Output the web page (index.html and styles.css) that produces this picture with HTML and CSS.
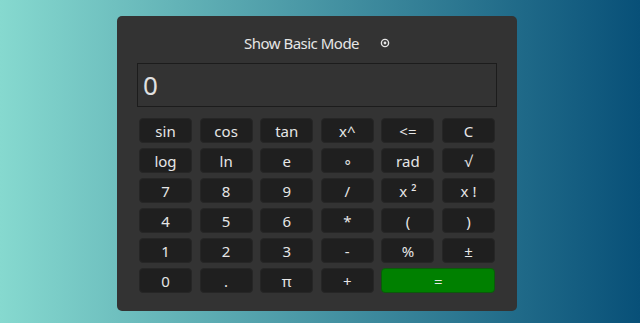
FILE: index.html
```html
<!DOCTYPE html>
<html lang="en">
<head>
    <meta charset="UTF-8">
    <meta name="viewport" content="width=device-width, initial-scale=1.0">
    <title>Calculator</title>
    <link rel="stylesheet" href="styles.css">
</head>
<body>
    <div class="calculator">
        <div class="mode-row">
            <span class="mode-label">Show Basic Mode</span>
            <svg class="mode-toggle" width="10" height="10" viewBox="0 0 10 10">
                <circle cx="5" cy="5" r="3.6" fill="none" stroke="#e6e6e6" stroke-width="1.4"/>
                <circle cx="5" cy="5" r="1.4" fill="#e6e6e6"/>
            </svg>
        </div>

        <div class="display">0</div>

        <div class="keys">
            <button class="key">sin</button>
            <button class="key">cos</button>
            <button class="key">tan</button>
            <button class="key">x^</button>
            <button class="key">&lt;=</button>
            <button class="key">C</button>

            <button class="key">log</button>
            <button class="key">ln</button>
            <button class="key">e</button>
            <button class="key">&#8728;</button>
            <button class="key">rad</button>
            <button class="key">&#8730;</button>

            <button class="key">7</button>
            <button class="key">8</button>
            <button class="key">9</button>
            <button class="key">/</button>
            <button class="key">x &#178;</button>
            <button class="key">x !</button>

            <button class="key">4</button>
            <button class="key">5</button>
            <button class="key">6</button>
            <button class="key">*</button>
            <button class="key">(</button>
            <button class="key">)</button>

            <button class="key">1</button>
            <button class="key">2</button>
            <button class="key">3</button>
            <button class="key">-</button>
            <button class="key">%</button>
            <button class="key">&#177;</button>

            <button class="key">0</button>
            <button class="key">.</button>
            <button class="key">&#960;</button>
            <button class="key">+</button>
            <button class="key equals">=</button>
        </div>
    </div>
</body>
</html>
```

FILE: styles.css
```css
html {
    background: linear-gradient(to right, #86d9cf, #085078);
    min-height: 100%;
}
body {
    font-family: 'Noto Sans', 'Open Sans', sans-serif;
    margin: 0;
    padding: 16px 6px 12px 0;
    color: #e6e6e6;
}
.calculator {
    width: 400px;
    box-sizing: border-box;
    margin: 0 auto;
    padding: 14px 20px 18px;
    background-color: #333333;
    border-radius: 5px;
}
.mode-row {
    display: flex;
    justify-content: center;
    align-items: center;
    gap: 21px;
    height: 26px;
    font-size: 15px;
    letter-spacing: -0.5px;
}
.mode-toggle {
    display: block;
}
.display {
    margin-top: 7px;
    height: 44px;
    box-sizing: border-box;
    border: 1px solid #1c1c1c;
    padding-left: 5px;
    font-size: 26px;
    line-height: 42px;
    color: #e0e0e0;
}
.keys {
    margin: 11px 2px 0;
    display: grid;
    grid-template-columns: repeat(6, 1fr);
    grid-auto-rows: 25px;
    column-gap: 7.6px;
    row-gap: 5px;
}
.key {
    background-color: #1f1f1f;
    color: #e6e6e6;
    border: 1px solid #262626;
    border-radius: 4px;
    font-family: inherit;
    font-size: 15px;
    padding: 0;
    cursor: pointer;
}
.key:hover {
    background-color: #2a2a2a;
}
.equals {
    grid-column: span 2;
    background-color: #008000;
    border-color: #0b5a0b;
}
.equals:hover {
    background-color: #009000;
}
```
